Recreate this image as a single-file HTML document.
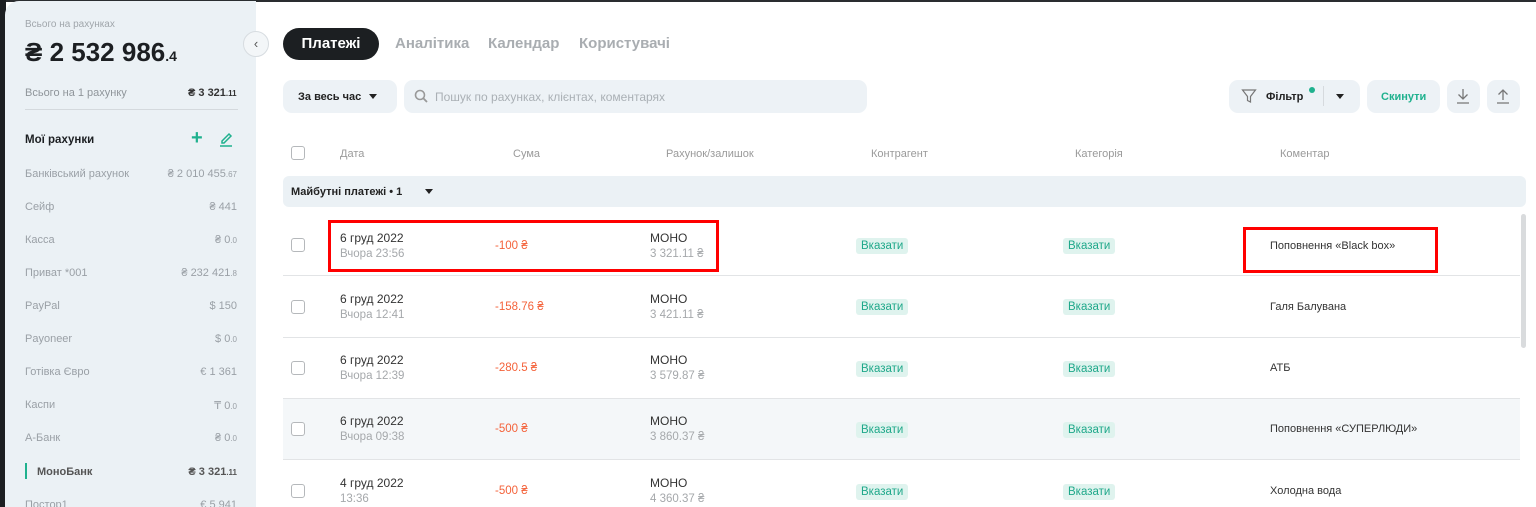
<!DOCTYPE html>
<html style="width:1536px;height:507px;overflow:hidden"><head><meta charset="utf-8"><style>
*{margin:0;padding:0;box-sizing:border-box}
body{width:1536px;height:507px;overflow:hidden;background:#fff;font-family:"Liberation Sans","DejaVu Sans",sans-serif;position:relative;color:#222}
.a{position:absolute;white-space:nowrap}
#frame{position:absolute;left:0;top:0;width:1536px;height:2px;background:#2a2d30}
#lstrip{position:absolute;left:0;top:0;width:6px;height:507px;background:#1c1f22}
#side{position:absolute;left:5px;top:1px;width:251px;height:506px;background:#ebf1f5;border-top-left-radius:14px;overflow:hidden}
.sl{font-size:11px;color:#9aa0a6}
.sr{font-size:11px;color:#9aa0a6;right:0;text-align:right}
.sm{font-size:8px}
.hd{font-size:11px;color:#9a9a9a;top:148px}
.cb{position:absolute;left:291px;width:14px;height:14px;border:1.5px solid #b5b8bb;border-radius:3px;background:#fff}
.row{position:absolute;left:283px;width:1237px;height:61px;border-bottom:1px solid #e2e4e6}
.d1{font-size:12px;color:#333}
.d2{font-size:11.5px;color:#a5a8ab}
.amt{font-size:11.5px;color:#f4623a}
.tag{position:absolute;height:16px;padding:0 5px;background:#dff3ee;color:#1fa88a;font-size:11.5px;line-height:16px;border-radius:3px}
.cm{font-size:11px;color:#333}
.btn{position:absolute;background:#edf2f6;border-radius:9px}
</style></head><body>
<div id="frame"></div><div id="lstrip"></div>
<div id="side">
 <div class="a" style="left:20px;top:18px;font-size:10px;color:#a0a6ab">Всього на рахунках</div>
 <div class="a" style="left:20px;top:36px;font-size:26px;font-weight:bold;color:#1c1f22">₴ 2 532 986<span style="font-size:14px">.4</span></div>
 <div class="a" style="left:20px;top:86px;font-size:11px;color:#8f959a">Всього на 1 рахунку</div>
 <div class="a" style="left:183px;top:86px;font-size:11px;font-weight:bold;color:#333">₴ 3 321<span class="sm">.11</span></div>
 <div style="position:absolute;left:20px;top:108px;width:213px;height:1px;background:#d4d9dd"></div>
 <div class="a" style="left:20px;top:133px;font-size:11.5px;font-weight:bold;color:#1c1f22">Мої рахунки</div>
 <div class="a" style="left:186px;top:126px;font-size:20px;color:#1fb18e;font-weight:bold">+</div>
 <svg class="a" style="left:214px;top:130px" width="14" height="16" viewBox="0 0 14 16"><path d="M3 10 L10 3 L12 5 L5 12 L3 12 Z" fill="none" stroke="#1fb18e" stroke-width="1.5"/><path d="M1 15 H13" stroke="#1fb18e" stroke-width="1.5"/></svg>
 <div style="position:absolute;left:20px;top:160px;width:212px">
  <div class="a sl" style="top:7px">Банківський рахунок</div><div class="a sr" style="top:7px">₴ 2 010 455<span class="sm">.67</span></div>
  <div class="a sl" style="top:40px">Сейф</div><div class="a sr" style="top:40px">₴ 441</div>
  <div class="a sl" style="top:73px">Касса</div><div class="a sr" style="top:73px">₴ 0<span class="sm">.0</span></div>
  <div class="a sl" style="top:106px">Приват *001</div><div class="a sr" style="top:106px">₴ 232 421<span class="sm">.8</span></div>
  <div class="a sl" style="top:139px">PayPal</div><div class="a sr" style="top:139px">$ 150</div>
  <div class="a sl" style="top:172px">Payoneer</div><div class="a sr" style="top:172px">$ 0<span class="sm">.0</span></div>
  <div class="a sl" style="top:205px">Готівка Євро</div><div class="a sr" style="top:205px">€ 1 361</div>
  <div class="a sl" style="top:238px">Каспи</div><div class="a sr" style="top:238px">₸ 0<span class="sm">.0</span></div>
  <div class="a sl" style="top:271px">А-Банк</div><div class="a sr" style="top:271px">₴ 0<span class="sm">.0</span></div>
  <div style="position:absolute;left:0;top:302px;width:2px;height:16px;background:#1fb18e"></div>
  <div class="a" style="left:12px;top:305px;font-size:11px;font-weight:bold;color:#555">МоноБанк</div><div class="a sr" style="top:305px;font-weight:bold;color:#555">₴ 3 321<span class="sm">.11</span></div>
  <div class="a sl" style="top:338px">Постор1</div><div class="a sr" style="top:338px">€ 5 941</div>
 </div>
</div>
<div style="position:absolute;left:243px;top:31px;width:26px;height:26px;border-radius:50%;background:#f3f6f8;border:1px solid #d7dce0;color:#555;font-size:13px;text-align:center;line-height:23px">‹</div>

<div class="a" style="left:283px;top:28px;width:96px;height:32px;border-radius:16px;background:#1c1f22;color:#fff;font-weight:bold;font-size:15px;text-align:center;line-height:32px">Платежі</div>
<div class="a" style="left:395px;top:35px;font-size:15px;font-weight:bold;color:#a9adb1">Аналітика</div>
<div class="a" style="left:488px;top:35px;font-size:15px;font-weight:bold;color:#a9adb1">Календар</div>
<div class="a" style="left:579px;top:35px;font-size:15px;font-weight:bold;color:#a9adb1">Користувачі</div>

<div class="btn" style="left:283px;top:80px;width:114px;height:33px"></div>
<div class="a" style="left:298px;top:91px;font-size:11px;font-weight:bold;color:#222">За весь час</div>
<div class="a" style="left:369px;top:94px;width:0;height:0;border-left:4.5px solid transparent;border-right:4.5px solid transparent;border-top:5px solid #222"></div>
<div class="btn" style="left:404px;top:80px;width:463px;height:33px"></div>
<svg class="a" style="left:414px;top:89px" width="14" height="14" viewBox="0 0 14 14"><circle cx="6" cy="6" r="4.5" fill="none" stroke="#999" stroke-width="1.6"/><path d="M9.3 9.3 L13 13" stroke="#999" stroke-width="1.8"/></svg>
<div class="a" style="left:435px;top:90px;font-size:12px;color:#aab0b5">Пошук по рахунках, клієнтах, коментарях</div>

<div class="btn" style="left:1229px;top:80px;width:131px;height:33px"></div>
<svg class="a" style="left:1241px;top:88px" width="16" height="16" viewBox="0 0 16 16"><path d="M1.5 2 H14.5 L9.5 8.5 V14 L6.5 12.5 V8.5 Z" fill="none" stroke="#777" stroke-width="1.2"/></svg>
<div class="a" style="left:1266px;top:91px;font-size:11px;font-weight:bold;color:#222">Фільтр</div>
<div class="a" style="left:1309px;top:87px;width:6px;height:6px;border-radius:50%;background:#1fb18e"></div>
<div class="a" style="left:1323px;top:86px;width:1px;height:20px;background:#d6dade"></div>
<div class="a" style="left:1336px;top:94px;width:0;height:0;border-left:4.5px solid transparent;border-right:4.5px solid transparent;border-top:5px solid #222"></div>
<div class="btn" style="left:1367px;top:80px;width:73px;height:33px"></div>
<div class="a" style="left:1381px;top:91px;font-size:11px;font-weight:bold;color:#1fb18e">Скинути</div>
<div class="btn" style="left:1447px;top:80px;width:33px;height:33px"></div>
<svg class="a" style="left:1455px;top:87px" width="16" height="18" viewBox="0 0 16 18"><path d="M8 2 V12 M3.5 7.5 L8 12 L12.5 7.5 M2 16 H14" fill="none" stroke="#777" stroke-width="1.3"/></svg>
<div class="btn" style="left:1487px;top:80px;width:33px;height:33px"></div>
<svg class="a" style="left:1495px;top:87px" width="16" height="18" viewBox="0 0 16 18"><path d="M8 13 V3 M3.5 7.5 L8 3 L12.5 7.5 M2 16 H14" fill="none" stroke="#777" stroke-width="1.3"/></svg>

<div class="cb" style="top:146px"></div>
<div class="a hd" style="left:340px">Дата</div>
<div class="a hd" style="left:513px">Сума</div>
<div class="a hd" style="left:666px">Рахунок/залишок</div>
<div class="a hd" style="left:871px">Контрагент</div>
<div class="a hd" style="left:1075px">Категорія</div>
<div class="a hd" style="left:1280px">Коментар</div>

<div class="a" style="left:283px;top:176px;width:1243px;height:31px;background:#ebf1f5;border-radius:6px"></div>
<div class="a" style="left:291px;top:186px;font-size:11px;font-weight:bold;color:#222">Майбутні платежі • 1</div>
<div class="a" style="left:425px;top:189px;width:0;height:0;border-left:4.5px solid transparent;border-right:4.5px solid transparent;border-top:5px solid #222"></div>

<div class="a" style="left:1521px;top:214px;width:5px;height:134px;border-radius:3px;background:#d9dbdd"></div>

<div class="row" style="top:215px"></div>
<div class="row" style="top:277px"></div>
<div class="row" style="top:338px"></div>
<div class="row" style="top:399px;background:#f4f7f9"></div>

<div class="cb" style="top:238px"></div>
<div class="a d1" style="left:340px;top:231px">6 груд 2022</div><div class="a d2" style="left:340px;top:248px">Вчора 23:56</div>
<div class="a amt" style="left:495px;top:240px">-100 ₴</div>
<div class="a d1" style="left:650px;top:231px">МОНО</div><div class="a d2" style="left:650px;top:248px">3 321.11 ₴</div>
<div class="tag" style="left:856px;top:238px">Вказати</div><div class="tag" style="left:1063px;top:238px">Вказати</div>
<div class="a cm" style="left:1270px;top:240px">Поповнення «Black box»</div>

<div class="cb" style="top:300px"></div>
<div class="a d1" style="left:340px;top:292px">6 груд 2022</div><div class="a d2" style="left:340px;top:309px">Вчора 12:41</div>
<div class="a amt" style="left:495px;top:301px">-158.76 ₴</div>
<div class="a d1" style="left:650px;top:292px">МОНО</div><div class="a d2" style="left:650px;top:309px">3 421.11 ₴</div>
<div class="tag" style="left:856px;top:299px">Вказати</div><div class="tag" style="left:1063px;top:299px">Вказати</div>
<div class="a cm" style="left:1270px;top:301px">Галя Балувана</div>

<div class="cb" style="top:361px"></div>
<div class="a d1" style="left:340px;top:353px">6 груд 2022</div><div class="a d2" style="left:340px;top:370px">Вчора 12:39</div>
<div class="a amt" style="left:495px;top:362px">-280.5 ₴</div>
<div class="a d1" style="left:650px;top:353px">МОНО</div><div class="a d2" style="left:650px;top:370px">3 579.87 ₴</div>
<div class="tag" style="left:856px;top:361px">Вказати</div><div class="tag" style="left:1063px;top:361px">Вказати</div>
<div class="a cm" style="left:1270px;top:362px">АТБ</div>

<div class="cb" style="top:422px"></div>
<div class="a d1" style="left:340px;top:414px">6 груд 2022</div><div class="a d2" style="left:340px;top:431px">Вчора 09:38</div>
<div class="a amt" style="left:495px;top:423px">-500 ₴</div>
<div class="a d1" style="left:650px;top:414px">МОНО</div><div class="a d2" style="left:650px;top:431px">3 860.37 ₴</div>
<div class="tag" style="left:856px;top:422px">Вказати</div><div class="tag" style="left:1063px;top:422px">Вказати</div>
<div class="a cm" style="left:1270px;top:423px">Поповнення «СУПЕРЛЮДИ»</div>

<div class="cb" style="top:484px"></div>
<div class="a d1" style="left:340px;top:476px">4 груд 2022</div><div class="a d2" style="left:340px;top:493px">13:36</div>
<div class="a amt" style="left:495px;top:485px">-500 ₴</div>
<div class="a d1" style="left:650px;top:476px">МОНО</div><div class="a d2" style="left:650px;top:493px">4 360.37 ₴</div>
<div class="tag" style="left:856px;top:484px">Вказати</div><div class="tag" style="left:1063px;top:484px">Вказати</div>
<div class="a cm" style="left:1270px;top:485px">Холодна вода</div>

<div class="a" style="left:328px;top:220px;width:391px;height:52px;border:3px solid #f00"></div>
<div class="a" style="left:1243px;top:227px;width:195px;height:46px;border:3px solid #f00"></div>
</body></html>
